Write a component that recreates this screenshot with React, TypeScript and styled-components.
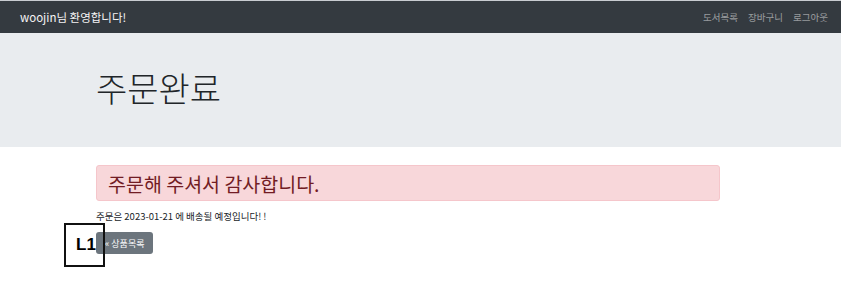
import React from "react";
import styled, { createGlobalStyle } from "styled-components";

const GlobalStyle = createGlobalStyle`
  html, body {
    margin: 0;
    padding: 0;
    background: #fff;
  }
  body {
    font-family: "Noto Sans CJK KR", "Noto Sans", sans-serif;
    color: #212529;
  }
`;

const App: React.FC = () => {
  const navLinks = ["도서목록", "장바구니", "로그아웃"];

  return (
    <Page>
      <GlobalStyle />
      <NavBar>
        <Brand>woojin님 환영합니다!</Brand>
        <NavLinks>
          {navLinks.map((label) => (
            <NavLink key={label} href="#">
              {label}
            </NavLink>
          ))}
        </NavLinks>
      </NavBar>
      <Jumbotron>
        <Heading>주문완료</Heading>
      </Jumbotron>
      <Container>
        <Alert>주문해 주셔서 감사합니다.</Alert>
        <Message>주문은 2023-01-21 에 배송될 예정입니다! !</Message>
        <Button href="#">&laquo; 상품목록</Button>
      </Container>
      <Marker>L1</Marker>
    </Page>
  );
};

export default App;

const Page = styled.div`
  position: relative;
  width: 841px;
  height: 287px;
  overflow: hidden;
  border-top: 1px solid #c9ccd1;
  box-sizing: border-box;
`;

const NavBar = styled.nav`
  display: flex;
  align-items: center;
  justify-content: space-between;
  height: 32px;
  padding: 0 13px 0 20px;
  background-color: #343a40;
`;

const Brand = styled.span`
  font-size: 11.5px;
  font-weight: 400;
  color: #f4f4f5;
`;

const NavLinks = styled.div`
  display: flex;
  gap: 10px;
`;

const NavLink = styled.a`
  font-size: 9.5px;
  color: rgba(255, 255, 255, 0.5);
  text-decoration: none;
`;

const Jumbotron = styled.header`
  display: flex;
  align-items: center;
  height: 114px;
  padding-left: 96px;
  background-color: #e9ecef;
`;

const Heading = styled.h1`
  margin: 0 0 3px;
  font-size: 34px;
  font-weight: 300;
  line-height: 1.2;
  color: #212529;
`;

const Container = styled.main`
  display: flex;
  flex-direction: column;
  align-items: flex-start;
  width: 624px;
  padding: 18px 0 0 96px;
`;

const Alert = styled.div`
  box-sizing: border-box;
  display: flex;
  align-items: center;
  width: 100%;
  height: 36px;
  padding: 0 11px;
  font-size: 19.5px;
  color: #721c24;
  background-color: #f8d7da;
  border: 1px solid #f5c6cb;
  border-radius: 3px;
`;

const Message = styled.p`
  margin: 8px 0 8px;
  font-size: 9.5px;
  line-height: 15px;
  color: #212529;
`;

const Button = styled.a`
  display: inline-flex;
  align-items: center;
  height: 22px;
  padding: 0 9px;
  font-size: 9px;
  color: #fff;
  text-decoration: none;
  background-color: #6c757d;
  border-radius: 3px;
`;

const Marker = styled.div`
  position: absolute;
  left: 64px;
  top: 222px;
  box-sizing: border-box;
  width: 41px;
  height: 44px;
  display: flex;
  align-items: center;
  padding-left: 10px;
  border: 2px solid #111;
  font-family: "Liberation Sans", Arial, sans-serif;
  font-size: 17px;
  font-weight: 700;
  color: #000;
`;
